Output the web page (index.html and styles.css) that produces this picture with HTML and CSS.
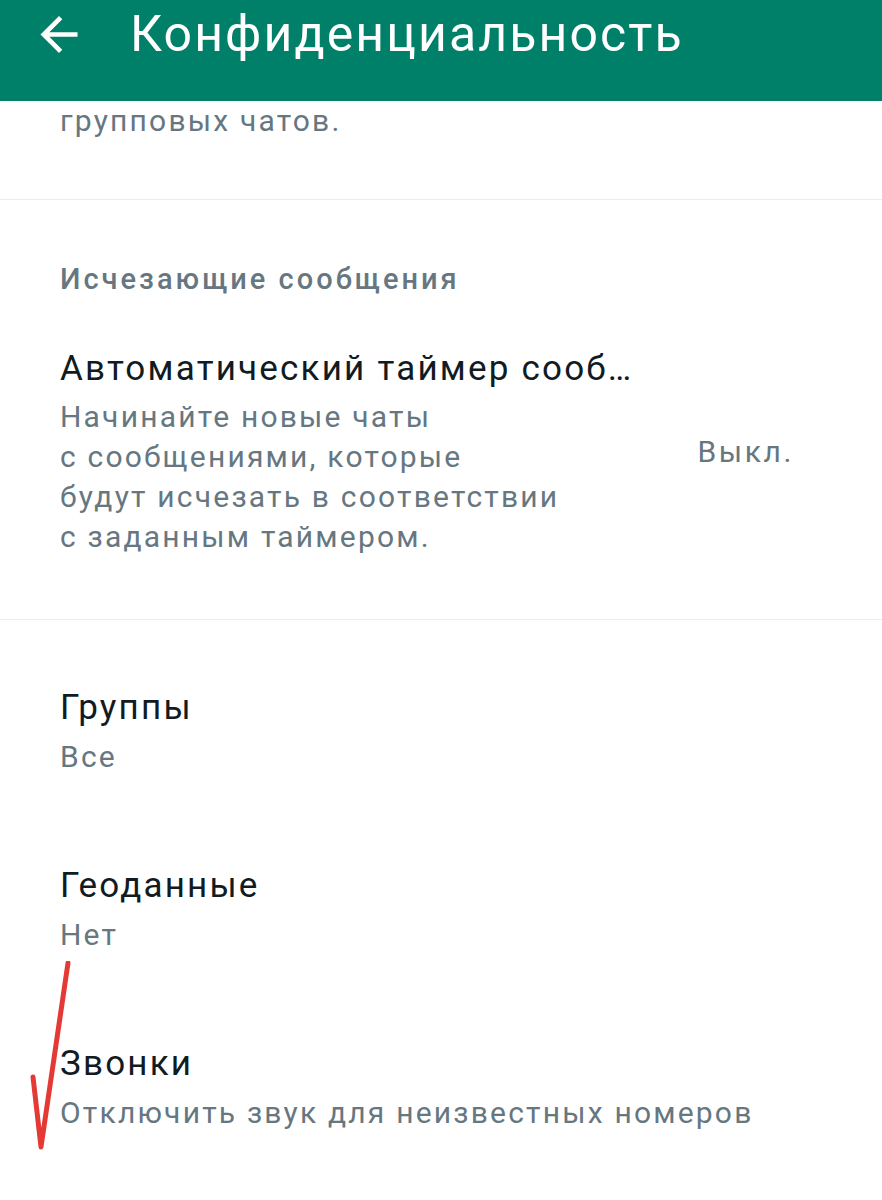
FILE: index.html
```html
<!DOCTYPE html>
<html lang="ru">
<head>
<meta charset="utf-8">
<link rel="stylesheet" href="styles.css">
</head>
<body>
<header class="appbar">
  <div class="appbar-row">
    <svg class="back" viewBox="4 4 16 16" width="40" height="40" aria-hidden="true">
      <path d="M20 11H7.83l5.59-5.59L12 4l-8 8 8 8 1.41-1.41L7.83 13H20v-2z" fill="#fff"/>
    </svg>
    <h1 class="appbar-title">Конфиденциальность</h1>
  </div>
</header>
<main class="content">
  <section class="section section-tail">
    <p class="sub">групповых чатов.</p>
  </section>
  <section class="section section-disappear">
    <h2 class="section-heading">Исчезающие сообщения</h2>
    <div class="item item-timer">
      <div class="item-text">
        <div class="title">Автоматический таймер сооб…</div>
        <div class="sub">Начинайте новые чаты<br>с сообщениями, которые<br>будут исчезать в соответствии<br>с заданным таймером.</div>
      </div>
      <div class="value">Выкл.</div>
    </div>
  </section>
  <section class="section section-list">
    <div class="item">
      <div class="item-text">
        <div class="title">Группы</div>
        <div class="sub">Все</div>
      </div>
    </div>
    <div class="item">
      <div class="item-text">
        <div class="title">Геоданные</div>
        <div class="sub">Нет</div>
      </div>
    </div>
    <div class="item">
      <div class="item-text">
        <div class="title">Звонки</div>
        <div class="sub">Отключить звук для неизвестных номеров</div>
      </div>
    </div>
  </section>
</main>
<svg class="mark" viewBox="0 0 50 200" width="50" height="200" aria-hidden="true">
  <path d="M5 116 L13 186 L40 2" fill="none" stroke="#e53935" stroke-width="5" stroke-linecap="round" stroke-linejoin="round"/>
</svg>
</body>
</html>
```
FILE: styles.css
```css
html, body {
  margin: 0;
  padding: 0;
  background: #ffffff;
}
body {
  font-family: Roboto, "Noto Sans", "Liberation Sans", sans-serif;
  width: 882px;
  height: 1200px;
  overflow: hidden;
  position: relative;
}
.appbar {
  background: #008069;
  height: 101px;
  box-sizing: border-box;
}
.appbar-row {
  display: flex;
  align-items: center;
  height: 68px;
  padding-left: 39px;
}
.back {
  display: block;
  flex: none;
  width: 40px;
  height: 37px;
}
.appbar-title {
  margin: 0 0 0 51px;
  color: #ffffff;
  font-size: 50px;
  font-weight: 400;
  line-height: 60px;
  letter-spacing: 2.1px;
  white-space: nowrap;
}
.section {
  padding-left: 60px;
  padding-right: 88px;
  border-bottom: 1px solid #e9edef;
}
.section-list {
  border-bottom: none;
  padding-top: 22px;
}
.section-tail {
  padding-bottom: 58px;
}
.sub {
  margin: 0;
  color: #667781;
  font-size: 30px;
  line-height: 40px;
  letter-spacing: 2.2px;
}
.title {
  color: #111b21;
  font-size: 35px;
  line-height: 44px;
  letter-spacing: 2.2px;
  white-space: nowrap;
}
.section-disappear {
  padding-top: 59px;
  padding-bottom: 62px;
}
.section-heading {
  margin: 0 0 48px;
  color: #667781;
  font-size: 29px;
  font-weight: 500;
  line-height: 40px;
  letter-spacing: 3px;
}
.item {
  display: flex;
  align-items: center;
  justify-content: space-between;
}
.item-text {
  display: flex;
  flex-direction: column;
  gap: 6px;
}
.section-list .item {
  padding: 44px 0 43px;
}
.section-list .item-text {
  gap: 7px;
}
.value {
  color: #667781;
  font-size: 30px;
  line-height: 40px;
  letter-spacing: 2.6px;
}
.mark {
  position: absolute;
  left: 28px;
  top: 961px;
}
```
